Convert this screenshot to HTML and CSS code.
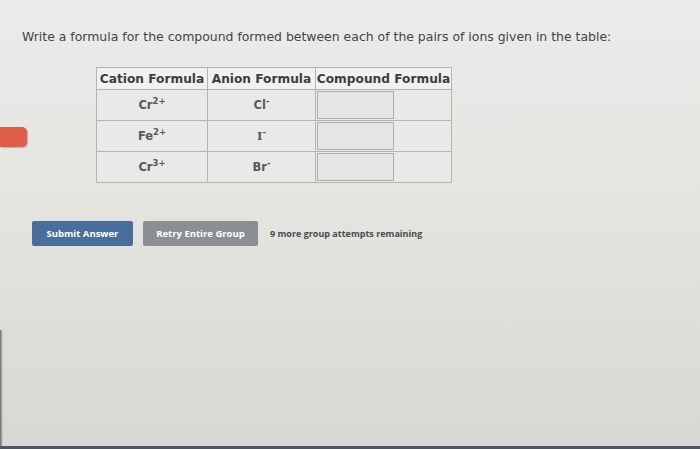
FILE: index.html
```html
<!DOCTYPE html>
<html>
<head>
<meta charset="utf-8">
<link rel="stylesheet" href="styles.css">
</head>
<body>
<div class="screen">
  <p class="prompt">Write a formula for the compound formed between each of the pairs of ions given in the table:</p>
  <div class="work">
    <div class="tab"></div>
    <table class="ions">
      <colgroup><col class="c1"><col class="c2"><col class="c3"></colgroup>
      <thead>
        <tr><th>Cation Formula</th><th>Anion Formula</th><th>Compound Formula</th></tr>
      </thead>
      <tbody>
        <tr><td>Cr<sup>2+</sup></td><td>Cl<sup>-</sup></td><td class="ans"><div class="box"></div></td></tr>
        <tr><td>Fe<sup>2+</sup></td><td class="serif">I<sup>-</sup></td><td class="ans"><div class="box"></div></td></tr>
        <tr><td>Cr<sup>3+</sup></td><td>Br<sup>-</sup></td><td class="ans"><div class="box"></div></td></tr>
      </tbody>
    </table>
  </div>
  <div class="actions">
    <button class="btn submit">Submit Answer</button>
    <button class="btn retry">Retry Entire Group</button>
    <span class="remaining">9 more group attempts remaining</span>
  </div>
</div>
</body>
</html>
```
FILE: styles.css
```css
html, body {
  margin: 0;
  height: 100%;
}
body {
  background: linear-gradient(180deg, #ebebe9 0%, #e4e4e1 45%, #d8d7d3 100%);
  font-family: "DejaVu Sans", Verdana, sans-serif;
  overflow: hidden;
}
.screen {
  height: 446px;
  border-bottom: 3px solid #4f5563;
  background: linear-gradient(90deg, rgba(55,58,68,0.7) 0, rgba(55,58,68,0.0) 3px) no-repeat 0 330px / 3px 120px;
}
.prompt {
  margin: 0;
  padding: 29px 0 0 22px;
  font-size: 12.45px;
  color: #444;
  line-height: 16px;
}
.work {
  display: flex;
  align-items: flex-start;
  margin-top: 22px;
}
.tab {
  width: 27px;
  height: 20px;
  margin-top: 60px;
  margin-right: 69px;
  background: #de5e4a;
  border-radius: 0 5px 5px 0;
  box-shadow: 1px 1px 1px rgba(120,80,40,0.35);
}
.ions {
  border-collapse: collapse;
  border: 1px solid #a9a9a9;
  table-layout: fixed;
  width: 355px;
}
.ions .c1 { width: 111px; }
.ions .c2 { width: 108px; }
.ions .c3 { width: 136px; }
.ions th {
  height: 21px;
  padding: 0;
  font-size: 12.2px;
  font-weight: bold;
  color: #3a3d44;
  background: #f1f1ef;
  border: 1px solid #b3b3b3;
  white-space: nowrap;
  text-align: center;
  overflow: hidden;
}
.ions td {
  height: 31px;
  padding: 6px 0 0;
  vertical-align: top;
  text-align: center;
  font-size: 11.5px;
  font-weight: bold;
  color: #55585e;
  background: #e9e9e7;
  border: 1px solid #b5b5b5;
  box-sizing: border-box;
}
.ions sup {
  font-size: 8.5px;
  vertical-align: 5px;
}
.ions td.serif {
  font-family: "DejaVu Serif", serif;
}
.ions td.ans {
  padding: 1px 0 1px 1px;
  text-align: left;
}
.box {
  width: 75px;
  height: 26px;
  border: 1px solid #adadad;
  background: #e5e5e3;
}
.actions {
  display: flex;
  align-items: center;
  margin: 38px 0 0 32px;
}
.btn {
  height: 25px;
  border: none;
  border-radius: 2px;
  color: #fff;
  font-family: "Open Sans", sans-serif;
  font-weight: bold;
  font-size: 9.5px;
  padding: 0;
}
.submit {
  width: 101px;
  background: #4a6e9c;
  margin-right: 10px;
}
.retry {
  width: 115px;
  background: #8b8e93;
  margin-right: 12px;
}
.remaining {
  font-family: "Open Sans", sans-serif;
  font-weight: bold;
  font-size: 9px;
  color: #4a4a4a;
}
```
